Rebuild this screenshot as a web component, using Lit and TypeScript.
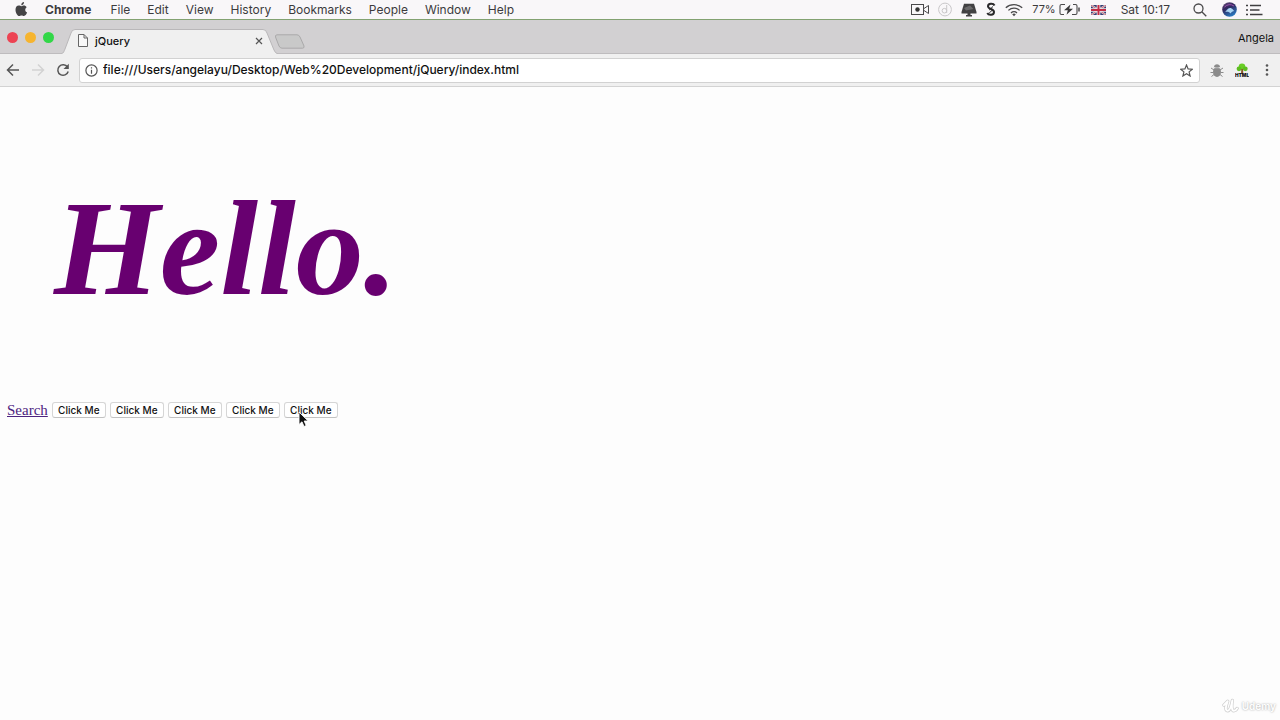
import { LitElement, html, css, svg } from "lit";
import { customElement, property } from "lit/decorators.js";

@customElement("menu-bar")
class MenuBar extends LitElement {
  static styles = css`
    :host {
      display: flex;
      justify-content: space-between;
      align-items: center;
      box-sizing: border-box;
      height: 20px;
      padding: 0 17px 0 15px;
      background: #f9f7f9;
      border-bottom: 1px solid #83a271;
      color: #3c3b3d;
      font: 12px/19px Inter, "Liberation Sans", sans-serif;
    }
    nav,
    .status {
      display: flex;
      align-items: center;
    }
    nav {
      gap: 17px;
    }
    .status {
      gap: 9px;
    }
    button {
      appearance: none;
      border: 0;
      padding: 0;
      margin: 0;
      background: none;
      color: inherit;
      font: inherit;
      white-space: nowrap;
      display: flex;
      align-items: center;
    }
    .app {
      font-weight: 700;
      padding-right: 2px;
    }
    .power {
      gap: 3px;
      font-size: 11px;
      padding-right: 1px;
    }
    .clock {
      padding: 0 14px 0 6px;
    }
    .search {
      padding-right: 6px;
    }
    svg {
      display: block;
    }
  `;

  render() {
    const menus = ["File", "Edit", "View", "History", "Bookmarks", "People", "Window", "Help"];
    return html`
      <nav aria-label="Menu bar">
        <button aria-label="Apple menu">
          <svg width="13" height="15" viewBox="0 0 13 15" fill="#454446">
            <path d="M9 0C7.400.2 6.100 1.700 6.300 3.200 7.900 3.200 9.100 1.600 9 0Z" />
            <path d="M6.500 4.300C5.800 4.300 4.900 3.600 3.800 3.600 1.900 3.600.5 5.200.5 7.700.5 10.700 2.400 14 4.200 14 5 14 5.600 13.500 6.600 13.500 7.600 13.500 8 14 8.900 14 10.500 14 11.700 11.700 12.100 10.500 9.700 9.400 9.700 6.400 11.700 5.200 11 4.100 9.900 3.600 9 3.600 7.900 3.600 7.200 4.300 6.500 4.300Z" />
          </svg>
        </button>
        <button class="app">Chrome</button>
        ${menus.map((name) => html`<button>${name}</button>`)}
      </nav>
      <div class="status">
        <svg width="19" height="13" viewBox="0 0 19 13" fill="none" stroke="#4a494b">
          <rect x="1.500" y="1.500" width="12" height="10" />
          <circle cx="7.500" cy="6.500" r="2.200" fill="#333" stroke="none" />
          <path d="M14 5.500 18.500 2.500V10.500L14 7.500" />
        </svg>
        <svg width="14" height="15" viewBox="0 0 14 15" fill="none" stroke="#c9c7c9">
          <circle cx="7" cy="7.500" r="6.400" />
          <circle cx="6.400" cy="8.700" r="2.300" />
          <path d="M8.700 3V11" />
        </svg>
        <svg width="16" height="14" viewBox="0 0 16 14">
          <path d="M3 .8H13L15.500 9H.5Z" fill="#424143" />
          <path d="M3 5 9 2.500 12.500 6 5 7.500Z" fill="#6b6a6c" />
          <path d="M.5 9.800H15.500M5 12.800H11" stroke="#424143" stroke-width="1.400" />
          <path d="M6.500 10H9.500V13H6.500Z" fill="#424143" />
        </svg>
        <svg width="10" height="15" viewBox="0 0 10 15" fill="none" stroke="#29282a" stroke-width="2">
          <path d="M8.500 3.500C7.500 1.200 2 1.200 2 4.200 2 7.500 8 6.500 8 10 8 13.500 2.500 13.500 1.300 11" />
          <path d="M3.200 8 7 4.500M3.200 11 7 7.500" stroke-width="1" />
        </svg>
        <svg width="18" height="14" viewBox="0 0 18 14" fill="none" stroke="#4a494b" stroke-width="1.300">
          <path d="M.8 4.800C5.300.6 12.700.6 17.200 4.800M3.400 7.400C6.600 4.400 11.400 4.400 14.600 7.400M6 10C7.700 8.300 10.300 8.300 12 10" />
          <path d="M7.200 11.200 9 13.200 10.800 11.200C9.800 10.400 8.200 10.400 7.200 11.200Z" fill="#4a494b" stroke="none" />
        </svg>
        <button class="power">
          77%
          <svg width="22" height="13" viewBox="0 0 22 13" fill="none" stroke="#4a494b" stroke-width="1.100">
            <path d="M6 1.500H2.500Q1 1.500 1 3V10Q1 11.500 2.500 11.500H5M14 1.500H16.500Q18 1.500 18 3V10Q18 11.500 16.500 11.500H13" />
            <path d="M20 4.500V8.500" stroke-width="1.500" />
            <path d="M11.500 1.500 5 7.300H8.800L7.500 11.800 14 5.800H10.200Z" fill="#39383a" stroke="none" />
          </svg>
        </button>
        <svg width="15" height="10" viewBox="0 0 15 10">
          <path d="M0 0H15V10H0Z" fill="#353b72" />
          <path d="M0 0 15 10M15 0 0 10" stroke="#ddd" stroke-width="2" />
          <path d="M0 0 15 10M15 0 0 10" stroke="#bd344d" stroke-width=".7" />
          <path d="M7.500 0V10M0 5H15" stroke="#eee" stroke-width="3.600" />
          <path d="M7.500 0V10M0 5H15" stroke="#c42b45" stroke-width="2" />
        </svg>
        <button class="clock">Sat 10:17</button>
        <button class="search" aria-label="Spotlight">
          <svg width="14" height="14" viewBox="0 0 14 14" fill="none" stroke="#4a494b" stroke-width="1.300">
            <circle cx="5.500" cy="5.500" r="4.500" />
            <path d="M8.800 8.800 13.300 13.300" />
          </svg>
        </button>
        <button aria-label="Siri">
          <svg width="15" height="15" viewBox="0 0 15 15">
            <defs>
              <linearGradient id="siri" x1="0" x2=".5" y1="0" y2="1">
                <stop offset="0" stop-color="#6b4a78" />
                <stop offset=".45" stop-color="#30275d" />
                <stop offset="1" stop-color="#2a77bd" />
              </linearGradient>
            </defs>
            <circle cx="7.500" cy="7.500" r="7.300" fill="url(#siri)" />
            <path d="M2.500 10C4.500 9.500 5.500 6 8 6S11 8.500 12.500 9C10.500 9 9.500 10 8.500 11.500 7.500 9.500 5 9.500 2.500 10Z" fill="#a9d5f3" />
            <path d="M2.500 5Q7 .8 12 4" fill="none" stroke="#9c4fae" />
          </svg>
        </button>
        <button aria-label="Notification Center">
          <svg width="17" height="12" viewBox="0 0 17 12" stroke="#3f3e40" stroke-width="1.400">
            <path d="M0 1.500H2M0 6H2M0 10.500H2M4 1.500H15M4 6H13.500M4 10.500H16.500" />
          </svg>
        </button>
      </div>
    `;
  }
}

@customElement("browser-chrome")
class BrowserChrome extends LitElement {
  @property() url = "";
  @property() tabTitle = "";

  static styles = css`
    :host {
      display: block;
      font: 12px/16px Inter, "Liberation Sans", sans-serif;
      color: #111;
    }
    button {
      appearance: none;
      border: 0;
      padding: 0;
      margin: 0;
      background: none;
      font: inherit;
      color: inherit;
      display: block;
    }
    svg {
      display: block;
    }
    .strip {
      display: flex;
      align-items: flex-end;
      height: 33px;
      background: #d2d0d2;
      border-bottom: 1px solid #bebcbe;
    }
    .lights {
      display: flex;
      gap: 7px;
      padding: 0 7px 10px;
    }
    .light {
      width: 11px;
      height: 11px;
      border-radius: 50%;
    }
    .close {
      background: #ed4353;
    }
    .minimise {
      background: #f6b42f;
    }
    .zoom {
      background: #32d748;
    }
    .tab {
      display: grid;
      width: 217px;
      height: 25px;
      margin-bottom: -1px;
    }
    .shape,
    .content {
      grid-area: 1 / 1;
    }
    .content {
      display: flex;
      align-items: center;
      gap: 7px;
      padding: 0 15px 2px 17px;
      font-size: 11px;
      font-weight: 500;
      z-index: 1;
    }
    .title {
      flex: 1;
    }
    .new {
      padding: 0 0 4px 0;
      margin-left: -4px;
    }
    .user {
      margin-left: auto;
      padding: 0 6px 7px;
      font-size: 11px;
    }
    .tools {
      display: flex;
      align-items: center;
      height: 32px;
      background: #f0f0f0;
      border-bottom: 1px solid #d3d3d3;
      padding: 0 6px;
    }
    .history {
      display: flex;
      gap: 11px;
      padding-right: 9px;
    }
    .address {
      display: flex;
      align-items: center;
      flex: 1;
      gap: 5px;
      box-sizing: border-box;
      height: 25px;
      padding: 0 6px 0 5px;
      border: 1px solid #d2d2d2;
      border-radius: 3px;
      background: #fff;
    }
    input {
      flex: 1;
      min-width: 0;
      border: 0;
      padding: 0;
      outline: 0;
      background: none;
      color: #111;
      font: inherit;
      font-weight: 500;
    }
    .extensions {
      display: flex;
      align-items: center;
      gap: 11px;
      padding-left: 10px;
    }
  `;

  render() {
    return html`
      <div class="strip">
        <div class="lights">
          <button class="light close" aria-label="Close window"></button>
          <button class="light minimise" aria-label="Minimise window"></button>
          <button class="light zoom" aria-label="Zoom window"></button>
        </div>
        <div class="tab">
          <svg class="shape" width="217" height="25" viewBox="0 0 217 25">
            <path d="M0 25C3 24 3 22 4 20L10 4Q11 .5 14 .5H202Q205 .5 206 4L213 21Q214 24 217 25" fill="#f0f0f0" stroke="#b9b7b9" />
          </svg>
          <div class="content">
            <svg width="10" height="13" viewBox="0 0 10 13" fill="#f8f8f8" stroke="#666">
              <path d="M.5.5H6L9.500 4V12.500H.5ZM6 .5V4H9.500" />
            </svg>
            <span class="title">${this.tabTitle}</span>
            <button aria-label="Close tab">
              <svg width="8" height="8" viewBox="0 0 8 8" stroke="#555" stroke-width="1.200">
                <path d="M1 1 7 7M7 1 1 7" />
              </svg>
            </button>
          </div>
        </div>
        <button class="new" aria-label="New tab">
          <svg width="31" height="15" viewBox="0 0 31 15">
            <path d="M3 .8H23Q25 .8 26 3L30 12Q30.500 14.200 28.500 14.200H8Q6 14.200 5 12L1.500 3Q1 1 3 .8Z" fill="#c9c9c9" stroke="#aaa9aa" />
          </svg>
        </button>
        <button class="user">Angela</button>
      </div>
      <div class="tools">
        <div class="history">
          <button aria-label="Back">
            <svg width="14" height="14" viewBox="0 0 14 14" fill="none" stroke="#555" stroke-width="1.500">
              <path d="M13 7H1.500M7 1.500 1.500 7 7 12.500" />
            </svg>
          </button>
          <button aria-label="Forward">
            <svg width="14" height="14" viewBox="0 0 14 14" fill="none" stroke="#d2d2d2" stroke-width="1.500">
              <path d="M1 7H12.500M7 1.500 12.500 7 7 12.500" />
            </svg>
          </button>
          <button aria-label="Reload">
            <svg width="14" height="14" viewBox="0 0 14 14" fill="none" stroke="#555" stroke-width="1.500">
              <path d="M11.500 4A5.300 5.300 0 1 0 12.200 8.500" />
              <path d="M12.800.8V6H7.500Z" fill="#555" stroke="none" />
            </svg>
          </button>
        </div>
        <div class="address">
          <svg width="13" height="13" viewBox="0 0 13 13" fill="none" stroke="#555" stroke-width="1.200">
            <circle cx="6.500" cy="6.500" r="5.600" />
            <path d="M6.500 5.700V9.800M6.500 3.200V4.600" />
          </svg>
          <input type="text" aria-label="Address" .value=${this.url} />
          <button aria-label="Bookmark this page">
            <svg width="13" height="13" viewBox="0 0 13 13" fill="none" stroke="#555" stroke-width="1.200">
              <path d="M6.500 1 8.100 4.900 12.300 5.200 9.100 7.900 10.100 12 6.500 9.800 2.900 12 3.900 7.900.7 5.200 4.900 4.900Z" />
            </svg>
          </button>
        </div>
        <div class="extensions">
          <button aria-label="Debugger extension">
            <svg width="14" height="15" viewBox="0 0 14 15" fill="#8b8b8b">
              <path d="M4 4C4 .2 10 .2 10 4Z" />
              <ellipse cx="7" cy="9" rx="4" ry="5" />
              <path d="M4 7 1 5M10 7 13 5M3 9.500H.5M11 9.500H13.500M4 11.500 1.500 13.500M10 11.500 12.500 13.500" stroke="#8b8b8b" />
              <path d="M3.500 4.800H10.500" stroke="#ccc" stroke-width=".7" />
            </svg>
          </button>
          <button aria-label="HTML Tree extension">
            <svg width="14" height="15" viewBox="0 0 14 15">
              <circle cx="7" cy="3.800" r="3.300" fill="#69ce25" />
              <circle cx="4" cy="5.800" r="2.400" fill="#5dbd20" />
              <circle cx="10.300" cy="5.800" r="2.400" fill="#5dbd20" />
              <path d="M6.300 6H8L8.300 11H6Z" fill="#8a5a2b" />
              <text x="7" y="14" text-anchor="middle" font-family="Inter, sans-serif" font-size="4.800" font-weight="900" fill="#111">HTML</text>
            </svg>
          </button>
          <button aria-label="Chrome menu">
            <svg width="14" height="14" viewBox="0 0 14 14" fill="#555">
              <circle cx="7" cy="2.500" r="1.300" />
              <circle cx="7" cy="7" r="1.300" />
              <circle cx="7" cy="11.500" r="1.300" />
            </svg>
          </button>
        </div>
      </div>
    `;
  }
}

@customElement("app-root")
class AppRoot extends LitElement {
  static styles = css`
    :host {
      display: flex;
      flex-direction: column;
      min-height: 100vh;
      background: #fdfdfd;
    }
    main {
      flex: 1;
      padding: 0 7px;
      font: 15px/18px "Liberation Serif", serif;
    }
    h1 {
      margin: 93px 47px 85px;
      color: #680070;
      font: italic 700 136px/136px "Liberation Serif", serif;
    }
    .row {
      display: flex;
      align-items: center;
      gap: 4px;
    }
    a {
      color: #4d2480;
    }
    .click {
      appearance: none;
      box-sizing: border-box;
      display: block;
      min-width: 54px;
      height: 16px;
      margin: 0;
      padding: 0 4px;
      border: 1px solid #d6d6d6;
      border-bottom-color: #c2c2c2;
      border-radius: 3px;
      background: #fff;
      color: #111;
      font: 500 10px/14px Inter, "Liberation Sans", sans-serif;
    }
    .last {
      position: relative;
    }
    .pointer {
      position: absolute;
      left: 14px;
      top: 9px;
      pointer-events: none;
    }
    footer {
      display: flex;
      justify-content: flex-end;
      align-items: center;
      gap: 3px;
      padding: 0 4px 6px;
      color: #fff;
      font: 600 10px/16px Inter, "Liberation Sans", sans-serif;
      text-shadow: 0 0 2px #999;
    }
  `;

  render() {
    const plain = [1, 2, 3, 4];
    return html`
      <menu-bar></menu-bar>
      <browser-chrome
        tabTitle="jQuery"
        url="file:///Users/angelayu/Desktop/Web%20Development/jQuery/index.html"
      ></browser-chrome>
      <main>
        <h1>Hello.</h1>
        <div class="row">
          <a href="#">Search</a>
          ${plain.map(() => html`<button class="click">Click Me</button>`)}
          <div class="last">
            <button class="click">Click Me</button>
            <svg class="pointer" width="11" height="17" viewBox="0 0 11 17">
              <path d="M1 1V13.500L4 10.800 6 15.500 8.200 14.500 6.200 10H10.200Z" fill="#111" stroke="#fff" stroke-width=".9" />
            </svg>
          </div>
        </div>
      </main>
      <footer>
        <svg width="17" height="16" viewBox="0 0 18 16" fill="none" stroke-linecap="round" stroke-linejoin="round">
          ${[["#cfcfcf", "3.500"], ["#fff", "2"]].map(
            ([color, width]) => svg`<path d="M2 7 6 3C4 8 3 13 6 13S10 7 11 2C10 7 10 13 12.500 13 14.500 13 15.500 11.500 16 10.500" stroke=${color} stroke-width=${width} />`
          )}
        </svg>
        <span>Udemy</span>
      </footer>
    `;
  }
}
